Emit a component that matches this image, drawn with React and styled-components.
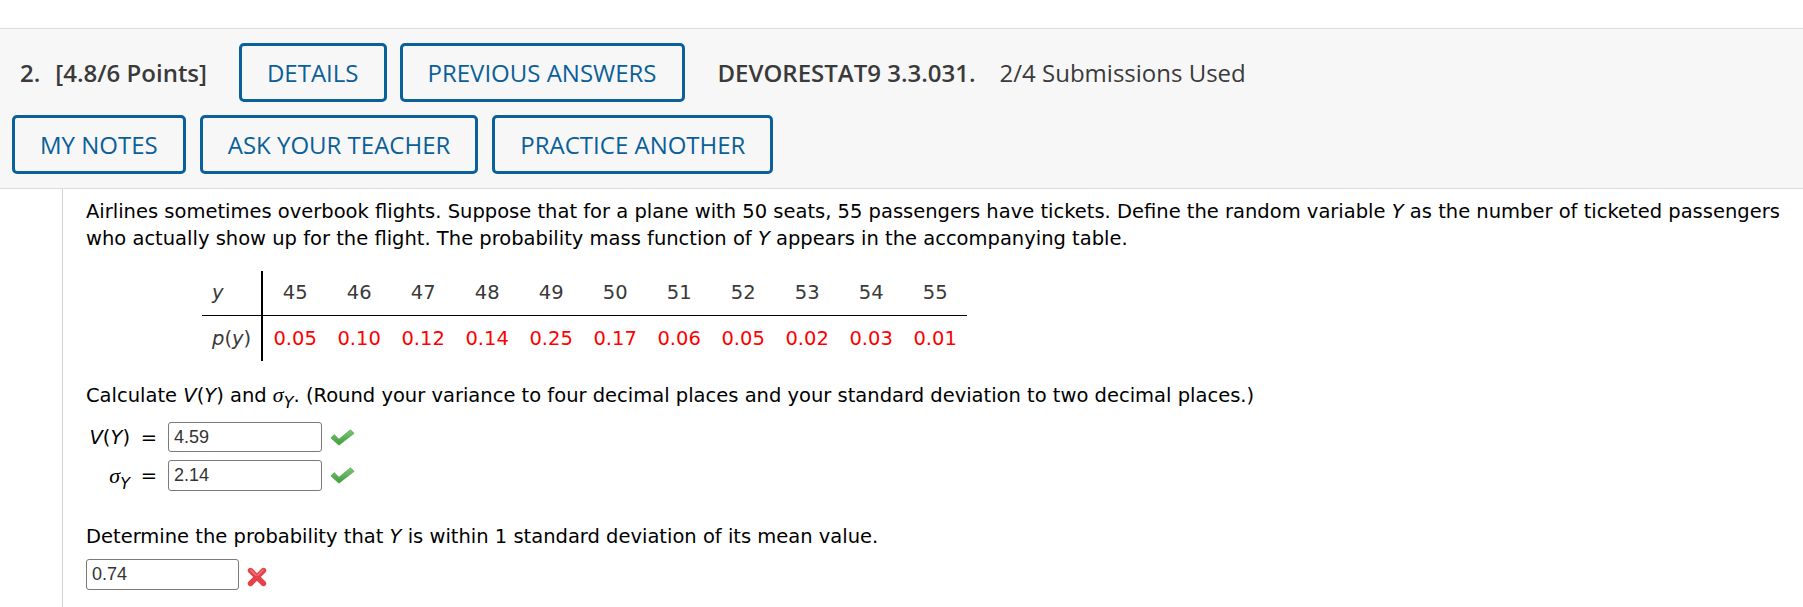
import React from "react";
import styled, { createGlobalStyle } from "styled-components";

const GlobalStyle = createGlobalStyle`
  body {
    margin: 0;
    background: #fff;
  }
`;

const Page = styled.div`
  min-height: 607px;
  display: flex;
  flex-direction: column;
`;

const Header = styled.div`
  margin-top: 28px;
  background: #f7f7f7;
  border-top: 1px solid #dcdcdc;
  border-bottom: 1px solid #dcdcdc;
  padding: 14px 12px 14px;
  display: flex;
  flex-direction: column;
  gap: 13px;
  font-family: "Open Sans", sans-serif;
  font-size: 24px;
  color: #3a3a3a;
`;

const HeaderRow = styled.div`
  display: flex;
  align-items: center;
  gap: ${(p) => p.$gap ?? 14}px;
  padding-left: ${(p) => p.$indent || 0}px;
`;

const Label = styled.span`
  font-weight: ${(p) => (p.$bold ? 600 : 400)};
  margin-left: ${(p) => p.$ml || 0}px;
  margin-right: ${(p) => p.$mr || 0}px;
  white-space: nowrap;
`;

const Btn = styled.button`
  font-family: "Open Sans", sans-serif;
  font-size: 24px;
  color: #0b5f99;
  background: transparent;
  border: 3px solid #0a6099;
  border-radius: 5px;
  height: 59px;
  padding: 0 25px;
  margin-right: ${(p) => p.$mr || 0}px;
  white-space: nowrap;
  cursor: pointer;
`;

const Content = styled.div`
  flex: 1;
  margin-left: 62px;
  border-left: 1px solid #d2d2d2;
  padding: 9px 8px 18px 23px;
  font-family: "DejaVu Sans", Verdana, sans-serif;
  font-size: 19.5px;
  line-height: 27px;
  color: #000;
`;

const Para = styled.p`
  margin: ${(p) => p.$mt || 0}px 0 0;
`;

const MathI = styled.i`
  font-style: italic;
`;

const Upright = styled.span`
  font-style: normal;
`;

const Sigma = styled.span`
  font-family: "Liberation Serif", "Times New Roman", serif;
  font-style: italic;
  font-size: 22px;
`;

const Sub = styled.sub`
  font-style: italic;
  font-size: 16px;
  line-height: 0;
  vertical-align: -6px;
`;

const Table = styled.table`
  margin: 19px 0 0 116px;
  border-collapse: collapse;
  color: #3a3a3a;
  line-height: 24px;
`;

const HeadCell = styled.td`
  padding: ${(p) => (p.$top ? "10px 10px 10px" : "11px 10px 10px")};
  border-right: 2px solid #000;
  text-align: left;
  font-style: italic;
  white-space: nowrap;
`;

const Cell = styled.td`
  padding: ${(p) => (p.$top ? "10px 10px" : "11px 10px 10px")};
  width: 44px;
  text-align: center;
  color: ${(p) => (p.$red ? "#ff0000" : "#3a3a3a")};
`;

const TopRow = styled.tr`
  border-bottom: 1px solid #000;
`;

const AnswerGrid = styled.div`
  margin-top: 13px;
  display: grid;
  grid-template-columns: 44px 38px 154px auto;
  row-gap: 8px;
  align-items: center;
`;

const VarLabel = styled.div`
  text-align: right;
  white-space: nowrap;
`;

const Eq = styled.div`
  text-align: center;
`;

const Input = styled.div`
  box-sizing: border-box;
  width: ${(p) => p.$w || 154}px;
  height: ${(p) => p.$h || 30}px;
  border: 1px solid #7a7a7a;
  border-radius: 3px;
  background: #fff;
  padding: 0 5px;
  font-family: "Liberation Sans", Arial, sans-serif;
  font-size: 18px;
  line-height: 28px;
  color: #333;
`;

const Mark = styled.span`
  display: inline-flex;
  margin-left: ${(p) => p.$ml || 8}px;
  margin-top: ${(p) => p.$mt || 0}px;
`;

const InputRow = styled.div`
  margin-top: 9px;
  display: flex;
  align-items: center;
`;

const Check = () => (
  <svg width="25" height="17" viewBox="0 0 24 16">
    <defs>
      <linearGradient id="cg" x1="0" y1="0" x2="0" y2="1">
        <stop offset="0" stopColor="#7cc876" />
        <stop offset="1" stopColor="#3f9a3c" />
      </linearGradient>
    </defs>
    <path
      d="M0.8 8.4 L4 5.2 L8.6 9.6 L19.6 0.6 L23.2 4 L8.6 15.4 Z"
      fill="url(#cg)"
      stroke="#4a9f45"
      strokeWidth="0.6"
      strokeLinejoin="round"
    />
  </svg>
);

const Cross = () => (
  <svg width="20" height="20" viewBox="0 0 20 20">
    <g stroke="#e5414a" strokeWidth="5.4" strokeLinecap="round">
      <line x1="3.5" y1="3.5" x2="16.5" y2="16.5" />
      <line x1="16.5" y1="3.5" x2="3.5" y2="16.5" />
    </g>
    <g stroke="#f58a8f" strokeWidth="1.4" strokeLinecap="round" opacity="0.8">
      <line x1="3.8" y1="3" x2="9" y2="8.2" />
      <line x1="16" y1="3" x2="11" y2="8" />
    </g>
  </svg>
);

const ys = [45, 46, 47, 48, 49, 50, 51, 52, 53, 54, 55];
const ps = ["0.05", "0.10", "0.12", "0.14", "0.25", "0.17", "0.06", "0.05", "0.02", "0.03", "0.01"];

export default function App() {
  return (
    <Page>
      <GlobalStyle />
      <Header>
        <HeaderRow $gap={0} $indent={8}>
          <Label $bold $mr={15}>2.</Label>
          <Label $bold $mr={32}>[4.8/6 Points]</Label>
          <Btn $mr={13}>DETAILS</Btn>
          <Btn>PREVIOUS ANSWERS</Btn>
          <Label $bold $ml={33}>DEVORESTAT9 3.3.031.</Label>
          <Label $ml={24}>2/4 Submissions Used</Label>
        </HeaderRow>
        <HeaderRow $gap={14}>
          <Btn>MY NOTES</Btn>
          <Btn>ASK YOUR TEACHER</Btn>
          <Btn>PRACTICE ANOTHER</Btn>
        </HeaderRow>
      </Header>
      <Content>
        <Para>
          Airlines sometimes overbook flights. Suppose that for a plane with 50 seats, 55 passengers
          have tickets. Define the random variable <MathI>Y</MathI> as the number of ticketed
          passengers who actually show up for the flight. The probability mass function of{" "}
          <MathI>Y</MathI> appears in the accompanying table.
        </Para>
        <Table>
          <tbody>
            <TopRow>
              <HeadCell $top>y</HeadCell>
              {ys.map((y) => (
                <Cell key={y} $top>
                  {y}
                </Cell>
              ))}
            </TopRow>
            <tr>
              <HeadCell>
                p<Upright>(</Upright>y<Upright>)</Upright>
              </HeadCell>
              {ps.map((p, i) => (
                <Cell key={i} $red>
                  {p}
                </Cell>
              ))}
            </tr>
          </tbody>
        </Table>
        <Para $mt={20}>
          Calculate <MathI>V</MathI>(<MathI>Y</MathI>) and <Sigma>σ</Sigma>
          <Sub>Y</Sub>. (Round your variance to four decimal places and your standard deviation to
          two decimal places.)
        </Para>
        <AnswerGrid>
          <VarLabel>
            <MathI>V</MathI>(<MathI>Y</MathI>)
          </VarLabel>
          <Eq>=</Eq>
          <Input>4.59</Input>
          <Mark>
            <Check />
          </Mark>
          <VarLabel>
            <Sigma>σ</Sigma>
            <Sub>Y</Sub>
          </VarLabel>
          <Eq>=</Eq>
          <Input $h={31}>2.14</Input>
          <Mark>
            <Check />
          </Mark>
        </AnswerGrid>
        <Para $mt={32}>
          Determine the probability that <MathI>Y</MathI> is within 1 standard deviation of its mean
          value.
        </Para>
        <InputRow>
          <Input $w={153} $h={31}>0.74</Input>
          <Mark $ml={8} $mt={5}>
            <Cross />
          </Mark>
        </InputRow>
      </Content>
    </Page>
  );
}
